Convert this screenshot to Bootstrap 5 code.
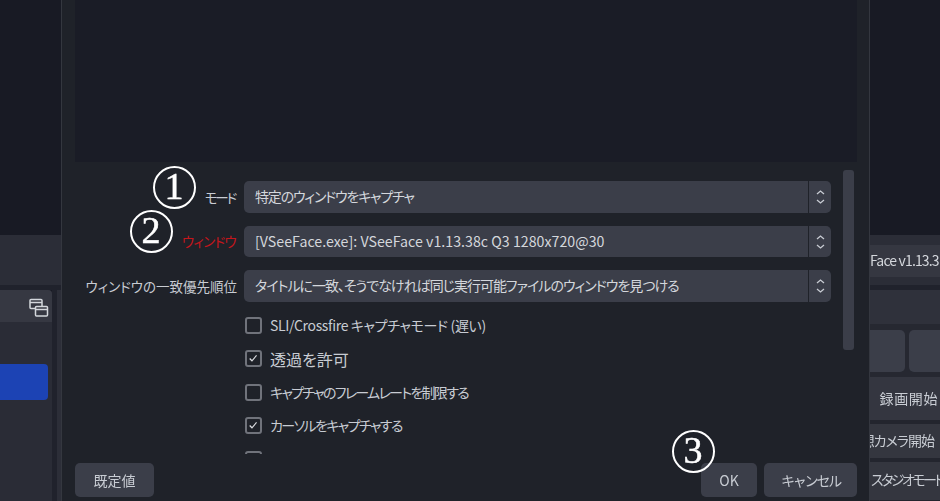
<!doctype html>
<html lang="ja"><head><meta charset="utf-8">
<link href="https://cdn.jsdelivr.net/npm/bootstrap@5.3.0/dist/css/bootstrap.min.css" rel="stylesheet">
<style>
html,body{height:501px;overflow:hidden}
body{background:#181a24;color:#c8ccd3;font-family:"Noto Sans CJK JP","Noto Sans",sans-serif;font-size:14px;font-feature-settings:"palt";filter:blur(.4px)}
.stage{width:940px;height:501px;position:relative}
.side-l{width:61px}.side-r{width:70px}
.main-dark{height:235px;background:#181a24}
.band-l{height:50px;background:#2b2d37}
.band-d{height:5px;background:#20222c}
.dock{width:52px;background:#2a2c36;border-radius:0 4px 0 0}
.dock-head{height:32px;background:#363842;border-radius:0 4px 0 0}
.dock-gap{width:5px;background:#20222c}
.dock-next{flex:1;background:#2c2e38}
.blue-item{height:36px;width:48px;margin-top:42px;background:#1c43b4;border-radius:0 4px 4px 0}
.dlg{width:809px;height:501px;background:#1f2229;border-left:1px solid #34373f;border-right:1px solid #34373f;padding:0 12px 4px 13px}
.pv{height:162px;background:#1a1c26}
.form-zone{height:301px;padding-top:8px}
.fields{width:757px}
.sel-stack{padding-top:11px;gap:13px}
.lab{width:162px;text-align:right;margin-right:7px;white-space:nowrap;font-size:13.5px}
.lab-red{color:#c4161c;letter-spacing:-.7px;padding-right:1px}
.lab-mode{letter-spacing:-2.2px;padding-right:2px}
.sel{height:31.5px;width:587px;flex-wrap:nowrap}
.sel .form-control,.sel .input-group-text{background:#3b3e49;border:0;color:#d4d7dc;font-size:14px;border-radius:5px;height:31.5px;padding:0 11px;line-height:31px}
.sel .input-group-text{width:22px;flex:none;padding:0;margin-left:1px!important;justify-content:center}
.tk-a{letter-spacing:-1.2px}.tk-b{letter-spacing:.02px;font-size:14.2px!important}.tk-c{letter-spacing:-1px}
.chk-row{height:33.5px;margin:0;padding:0;display:flex;align-items:center;gap:8px;margin-left:170px}
.chk-row .form-check-input{width:17px;height:17px;margin:0;background-color:transparent;border:2px solid #70737b;border-radius:3px;float:none}
.chk-row .form-check-input:checked{background-color:transparent;border-color:#70737b;background-image:url("data:image/svg+xml,%3csvg xmlns='http://www.w3.org/2000/svg' viewBox='0 0 17 17'%3e%3cpath fill='none' stroke='%23d8dade' stroke-width='1.6' d='M3.500 8.500l3 3 6-7'/%3e%3c/svg%3e");background-size:100%}
.chk-row .form-check-label{font-size:14px;color:#c8ccd3}
.chk-row .lb-tou{font-size:16px}
.lb-sli{letter-spacing:-.35px}.lb-cap{letter-spacing:-1.7px}.lb-cur{letter-spacing:-1.600px}
.checks{margin-top:7px;height:145px;overflow:hidden}
.scroll-t{width:11px;height:180px;background:#3b3e49;border-radius:3px;margin-left:11px}
.foot{gap:7px}
.foot .btn{background:#3b3e49;border:0;color:#c8ccd3;height:34px;font-size:14px;padding:0;border-radius:5px}
.b-def{width:79px}.b-ok{width:56px}.b-can{width:93px;letter-spacing:-2.200px}
.r-top{height:235px;background:#181a24}
.r-band{height:10px;background:#2b2d37}
.r-field{height:32px;background:#353741;font-size:14px;white-space:nowrap;overflow:hidden;line-height:31px;letter-spacing:-.85px;color:#d4d7dc}
.r-mid{height:8px;background:#2b2d37}
.r-dark{height:5px;background:#20222c}
.r-panel{background:#2f313b;height:211px;padding-top:34px}
.r-gap{background:#262831;padding-top:6px;padding-bottom:5px}
.r-sq{height:42px;background:#3b3e49;border-radius:5px}
.r-sq-a{width:35px;border-radius:0 5px 5px 0}
.r-sq-b{flex:1;border-radius:5px 0 0 5px}
.r-list{background:#23252e;gap:4px;padding-bottom:1px}
.r-btn{background:#34363f;white-space:nowrap;overflow:hidden;font-size:14px;color:#c8ccd3;display:flex;align-items:center}
.r-rec{height:43px;justify-content:flex-end;padding-right:2px;letter-spacing:.6px;background:#343640}
.r-cam{height:34px;justify-content:flex-end;padding:0 6px 2px 0;letter-spacing:-1px}
.r-std{height:38px;padding:0 0 4px 1px;letter-spacing:-2.500px}
.mark-no{position:absolute;width:43px;height:43px;border:2.5px solid #fff;border-radius:50%;color:#fff;font-family:"Liberation Serif",serif;font-size:38px;line-height:37px;text-align:center;-webkit-text-stroke:.5px #fff}
.m1{left:152.5px;top:165.5px}.m2{left:129.5px;top:209.5px}.m3{left:671.5px;top:429.5px}
.layer-ic{position:absolute;left:29px;top:298px}
</style></head><body>
<div class="stage d-flex">
 <div class="side-l d-flex flex-column">
  <div class="main-dark"></div>
  <div class="band-l"></div><div class="band-d"></div>
  <div class="d-flex flex-grow-1">
   <div class="dock"><div class="dock-head"></div><div class="blue-item"></div></div>
   <div class="dock-gap"></div><div class="dock-next"></div>
  </div>
 </div>
 <div class="dlg d-flex flex-column">
  <div class="pv"></div>
  <div class="form-zone d-flex">
   <div class="fields">
    <div class="d-flex flex-column sel-stack">
     <div class="d-flex align-items-center"><div class="lab lab-mode">モード</div>
      <div class="input-group sel"><span class="form-control tk-a">特定のウィンドウをキャプチャ</span><span class="input-group-text"><svg width="9" height="17" viewBox="0 0 9 17" fill="none" stroke="#c8ccd3" stroke-width="1.3"><path d="M1 6l3.500-3 3.500 3M1 12l3.500 3 3.500-3"/></svg></span></div></div>
     <div class="d-flex align-items-center"><div class="lab lab-red">ウィンドウ</div>
      <div class="input-group sel"><span class="form-control tk-b">[VSeeFace.exe]: VSeeFace v1.13.38c Q3 1280x720@30</span><span class="input-group-text"><svg width="9" height="17" viewBox="0 0 9 17" fill="none" stroke="#c8ccd3" stroke-width="1.3"><path d="M1 6l3.500-3 3.500 3M1 12l3.500 3 3.500-3"/></svg></span></div></div>
     <div class="d-flex align-items-center"><div class="lab">ウィンドウの一致優先順位</div>
      <div class="input-group sel"><span class="form-control tk-c">タイトルに一致、そうでなければ同じ実行可能ファイルのウィンドウを見つける</span><span class="input-group-text"><svg width="9" height="17" viewBox="0 0 9 17" fill="none" stroke="#c8ccd3" stroke-width="1.3"><path d="M1 6l3.500-3 3.500 3M1 12l3.500 3 3.500-3"/></svg></span></div></div>
    </div>
    <div class="checks">
     <div class="form-check chk-row"><input class="form-check-input" type="checkbox" id="c1"><label class="form-check-label lb-sli" for="c1">SLI/Crossfire キャプチャモード (遅い)</label></div>
     <div class="form-check chk-row"><input class="form-check-input" type="checkbox" id="c2" checked><label class="form-check-label lb-tou" for="c2">透過を許可</label></div>
     <div class="form-check chk-row"><input class="form-check-input" type="checkbox" id="c3"><label class="form-check-label lb-cap" for="c3">キャプチャのフレームレートを制限する</label></div>
     <div class="form-check chk-row"><input class="form-check-input" type="checkbox" id="c4" checked><label class="form-check-label lb-cur" for="c4">カーソルをキャプチャする</label></div>
     <div class="form-check chk-row"><input class="form-check-input" type="checkbox" id="c5"></div>
    </div>
   </div>
   <div class="scroll-t"></div>
  </div>
  <div class="foot d-flex align-items-center">
   <button class="btn b-def me-auto">既定値</button>
   <button class="btn b-ok">OK</button>
   <button class="btn b-can">キャンセル</button>
  </div>
 </div>
 <div class="side-r d-flex flex-column">
  <div class="r-top"></div><div class="r-band"></div>
  <div class="r-field">Face v1.13.3</div>
  <div class="r-mid"></div>
  <div class="r-dark"></div>
  <div class="r-panel d-flex flex-column">
   <div class="r-gap d-flex gap-1"><div class="r-sq r-sq-a"></div><div class="r-sq r-sq-b"></div></div>
   <div class="r-list d-flex flex-column">
    <div class="r-btn r-rec">録画開始</div>
    <div class="r-btn r-cam">仮想カメラ開始</div>
    <div class="r-btn r-std">スタジオモード</div>
   </div>
  </div>
 </div>
 <svg class="layer-ic" width="20" height="20" viewBox="0 0 20 20" fill="none" stroke="#d4d7dc" stroke-width="1.5"><rect x="1" y="1.500" width="12" height="9" rx="1"/><path d="M1 4.500h12"/><rect x="6.500" y="8.500" width="12" height="9.500" rx="1" fill="#363842"/><path d="M6.500 11.500h12"/></svg>
 <div class="mark-no m1">1</div><div class="mark-no m2">2</div><div class="mark-no m3">3</div>
</div>
<script src="https://cdn.jsdelivr.net/npm/bootstrap@5.3.0/dist/js/bootstrap.bundle.min.js"></script>
</body></html>
